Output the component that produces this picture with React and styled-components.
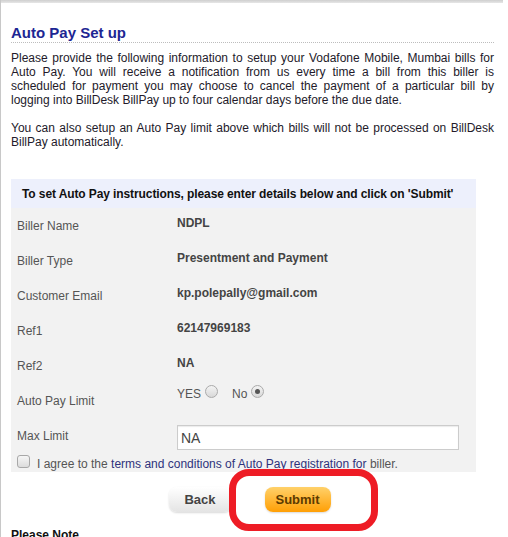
import React from "react";
import styled, { createGlobalStyle } from "styled-components";

const GlobalStyle = createGlobalStyle`
  html, body {
    margin: 0;
    padding: 0;
    background: #ffffff;
  }
  body {
    font-family: "Liberation Sans", Arial, sans-serif;
    font-size: 12px;
    color: #222;
  }
`;

const details = [
  { label: "Biller Name", value: "NDPL" },
  { label: "Biller Type", value: "Presentment and Payment" },
  { label: "Customer Email", value: "kp.polepally@gmail.com" },
  { label: "Ref1", value: "62147969183" },
  { label: "Ref2", value: "NA" },
];

function App() {
  return (
    <>
      <GlobalStyle />
      <Frame>
        <TopShade />
        <Content>
          <Title>Auto Pay Set up</Title>
          <Text>
            Please provide the following information to setup your Vodafone
            Mobile, Mumbai bills for Auto Pay. You will receive a notification
            from us every time a bill from this biller is scheduled for payment
            you may choose to cancel the payment of a particular bill by
            logging into BillDesk BillPay up to four calendar days before the
            due date.
          </Text>
          <Text>
            You can also setup an Auto Pay limit above which bills will not be
            processed on BillDesk BillPay automatically.
          </Text>

          <FormBox>
            <FormHead>
              To set Auto Pay instructions, please enter details below and click
              on 'Submit'
            </FormHead>
            {details.map((d) => (
              <Row key={d.label}>
                <Label>{d.label}</Label>
                <Value>{d.value}</Value>
              </Row>
            ))}
            <Row>
              <Label>Auto Pay Limit</Label>
              <Choices>
                <Choice>
                  YES <Radio />
                </Choice>
                <Choice>
                  No <Radio checked />
                </Choice>
              </Choices>
            </Row>
            <Row>
              <Label>Max Limit</Label>
              <Field>NA</Field>
            </Row>
            <AgreeRow>
              <Check />
              <AgreeText>
                I agree to the{" "}
                <TermsLink>
                  terms and conditions of Auto Pay registration for
                </TermsLink>{" "}
                biller.
              </AgreeText>
            </AgreeRow>
          </FormBox>

          <Buttons>
            <BackButton>Back</BackButton>
            <SubmitButton>Submit</SubmitButton>
          </Buttons>

          <Note>Please Note</Note>
        </Content>
        <Highlight />
      </Frame>
    </>
  );
}

export default App;

const Frame = styled.div`
  position: relative;
  width: 502px;
  height: 537px;
  overflow: hidden;
  border-left: 1px solid #c8c8c8;
`;

const TopShade = styled.div`
  height: 3px;
  background: linear-gradient(#cfcfcf, #e6e6e6);
`;

const Content = styled.div`
  padding: 21px 9px 0 10px;
`;

const Title = styled.h2`
  margin: 0;
  padding-bottom: 1px;
  font-size: 15px;
  line-height: 17px;
  font-weight: bold;
  color: #1d2693;
  border-bottom: 1px dotted #bdbdbd;
`;

const Text = styled.p`
  margin: 8px 0 14px;
  font-size: 12px;
  line-height: 14px;
  text-align: justify;
  color: #231a2a;

  & + & {
    margin-top: 0;
  }
`;

const FormBox = styled.div`
  width: 465px;
  margin-top: 30px;
  background: #f2f2f2;
`;

const FormHead = styled.div`
  height: 29px;
  padding-left: 11px;
  display: flex;
  align-items: center;
  background: #edf0fc;
  font-weight: bold;
  font-size: 12px;
  letter-spacing: -0.1px;
  color: #111;
`;

const Row = styled.div`
  height: 35px;
  display: flex;
  align-items: center;
`;

const Label = styled.div`
  width: 166px;
  padding-left: 6px;
  box-sizing: border-box;
  color: #555;
  font-size: 12px;
`;

const Value = styled.div`
  margin-bottom: 5px;
  font-weight: bold;
  color: #444;
  font-size: 12px;
`;

const Choices = styled.div`
  display: flex;
  gap: 14px;
  margin-bottom: 14px;
`;

const Choice = styled.span`
  display: inline-flex;
  align-items: center;
  gap: 4px;
  color: #555;
  font-size: 12px;
`;

const Radio = styled.span`
  position: relative;
  width: 11px;
  height: 11px;
  margin-top: -5px;
  border-radius: 50%;
  border: 1px solid #aaa;
  background: linear-gradient(#f4f4f4, #d8d8d8);

  &::after {
    content: "";
    display: ${(p) => (p.checked ? "block" : "none")};
    position: absolute;
    left: 3px;
    top: 3px;
    width: 5px;
    height: 5px;
    border-radius: 50%;
    background: #555;
  }
`;

const Field = styled.div`
  width: 282px;
  height: 25px;
  box-sizing: border-box;
  margin-top: 4px;
  padding-left: 3px;
  display: flex;
  align-items: center;
  background: #fff;
  border: 1px solid #ccc;
  box-shadow: inset 0 1px 1px rgba(0, 0, 0, 0.08);
  font-size: 14px;
  color: #444;
`;

const AgreeRow = styled.div`
  height: 19px;
  padding-left: 6px;
  display: flex;
  align-items: flex-start;
  gap: 7px;
`;

const Check = styled.span`
  width: 11px;
  height: 11px;
  margin-top: 2px;
  border: 1px solid #a8a8a8;
  border-radius: 3px;
  background: linear-gradient(#f6f6f6, #dcdcdc);
`;

const AgreeText = styled.span`
  line-height: 14px;
  margin-top: 4px;
  color: #555;
  font-size: 12px;
`;

const TermsLink = styled.span`
  color: #2f327c;
`;

const Buttons = styled.div`
  display: flex;
  justify-content: center;
  gap: 33px;
  margin-top: 15px;
  padding-right: 6px;
`;

const ButtonBase = styled.div`
  height: 25px;
  border-radius: 8px;
  display: flex;
  align-items: center;
  justify-content: center;
  font-weight: bold;
  font-size: 13px;
`;

const BackButton = styled(ButtonBase)`
  width: 63px;
  color: #444;
  background: linear-gradient(#ffffff, #e4e4e4);
  box-shadow: 0 1px 2px rgba(0, 0, 0, 0.15);
`;

const SubmitButton = styled(ButtonBase)`
  width: 66px;
  color: #5c3a00;
  background: linear-gradient(#ffd16a, #ff9f05);
  box-shadow: 0 1px 2px rgba(0, 0, 0, 0.15);
`;

const Note = styled.div`
  margin-top: 16px;
  font-weight: bold;
  font-size: 12px;
  color: #111;
`;

const Highlight = styled.div`
  position: absolute;
  left: 228px;
  top: 469px;
  width: 149px;
  height: 62px;
  box-sizing: border-box;
  border: 7px solid #ee1c25;
  border-radius: 20px;
`;
